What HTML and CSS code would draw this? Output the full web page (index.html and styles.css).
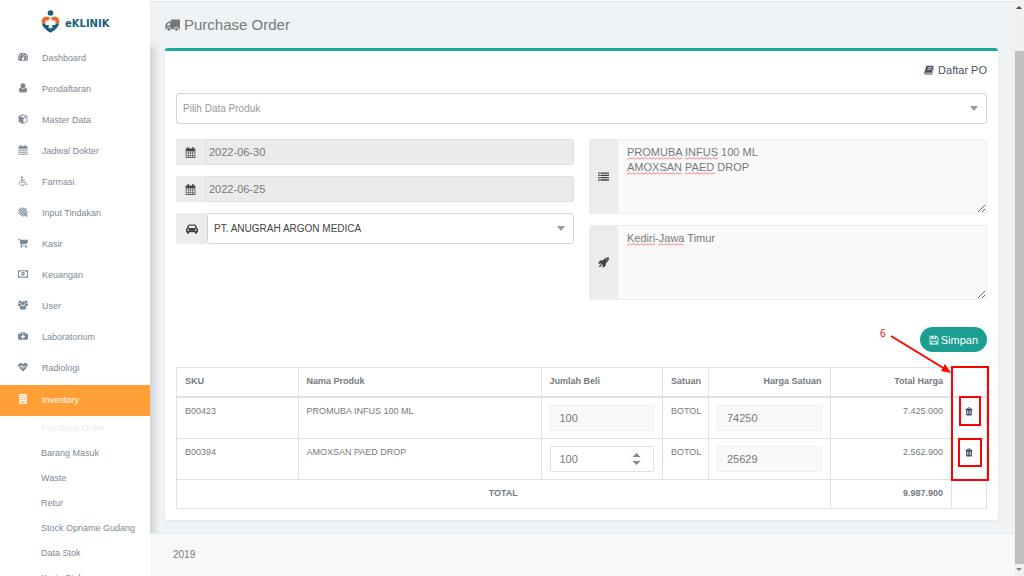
FILE: index.html
```html
<!DOCTYPE html>
<html lang="id">
<head>
    <meta charset="UTF-8">
    <meta name="viewport" content="width=device-width, initial-scale=1.0">
    <title>eKlinik - Purchase Order</title>
    <link rel="stylesheet" href="styles.css">
</head>
<body>
    <!-- Icon sprite -->
    <svg class="sprite" aria-hidden="true">
        <symbol id="i-dashboard" viewBox="0 0 16 16"><path fill-rule="evenodd" d="M8 1a8 8 0 0 0-8 8c0 1.500.4 3.400 1.200 5h13.600C15.600 12.400 16 10.500 16 9a8 8 0 0 0-8-8zM8 2.500a1 1 0 1 1 0 2 1 1 0 0 1 0-2zM3.700 4.300a1 1 0 1 1 0 2 1 1 0 0 1 0-2zM12.300 4.300a1 1 0 1 1 0 2 1 1 0 0 1 0-2zM2.200 8.500a1 1 0 1 1 0 2 1 1 0 0 1 0-2zM13.800 8.500a1 1 0 1 1 0 2 1 1 0 0 1 0-2zM9.300 5.500l.9.300-1 3.700a1.800 1.800 0 1 1-1-.3z"/></symbol>
        <symbol id="i-user" viewBox="0 0 16 16"><circle cx="8" cy="4.500" r="4"/><path d="M4.300 7.300C2 8 1.500 10 1.500 12c0 1.600 1 3 2.500 3h8c1.500 0 2.500-1.400 2.500-3 0-2-.5-4-2.800-4.700a5 5 0 0 1-7.400 0z"/></symbol>
        <symbol id="i-cube" viewBox="0 0 16 16"><path fill-rule="evenodd" d="M8 .5L15 3v9.500L8 16l-7-3.500V3zM8 2L3 3.800 8 5.700l5-1.900zM8.700 7v7.200l5-2.500V5.200z"/></symbol>
        <symbol id="i-calendar" viewBox="0 0 16 16"><path fill-rule="evenodd" d="M3.500 0h2v2h5V0h2v2H15v14H1V2h2.500zM2 6v2.200h2.500V6zm3.300 0v2.200h2.400V6zm3.200 0v2.200h2.300V6zm3.200 0v2.200H14V6zM2 9v2.500h2.500V9zm3.300 0v2.500h2.400V9zm3.200 0v2.500h2.300V9zm3.200 0v2.500H14V9zM2 12.300V15h2.500v-2.700zm3.300 0V15h2.400v-2.700zm3.200 0V15h2.300v-2.700zm3.200 0V15H14v-2.700z"/></symbol>
        <symbol id="i-wheelchair" viewBox="0 0 16 16"><circle cx="6" cy="2" r="1.700"/><path d="M6 4v6h5.500l2 4 2-1M6 6.500h5M4.500 7.500a4.200 4.200 0 1 0 6.300 5" fill="none" stroke="currentColor" stroke-width="1.400"/></symbol>
        <symbol id="i-scan" viewBox="0 0 16 16"><path d="M1 6l5-5M1 10l9-9M3 12l10-10M5 14l9-9M8 15l7-7M10 11l5 4M12 15l3-3" fill="none" stroke="currentColor" stroke-width="1.700"/></symbol>
        <symbol id="i-cart" viewBox="0 0 16 16"><path d="M0 1h3.300l.5 1.700H16L14.800 9l-9.500 1 .3 1.200H14v1.300H4.400L2.300 2.300H0z"/><circle cx="5.500" cy="14.300" r="1.400"/><circle cx="13" cy="14.300" r="1.400"/></symbol>
        <symbol id="i-money" viewBox="0 0 16 16"><path fill-rule="evenodd" d="M0 2h16v12H0zM3 3.500c0 1-.7 1.700-1.600 1.700v5.600c.9 0 1.600.7 1.600 1.700h10c0-1 .7-1.700 1.600-1.700V5.200C13.700 5.200 13 4.500 13 3.500z"/><path fill-rule="evenodd" d="M8 4.500c1.800 0 2.800 1.500 2.800 3.500S9.800 11.500 8 11.500 5.200 10 5.200 8 6.200 4.500 8 4.500zM7 6v1h.6v2.500H7v.8h2.200v-.8h-.6V6z"/></symbol>
        <symbol id="i-users" viewBox="0 0 16 16"><circle cx="3.200" cy="3" r="2.300"/><circle cx="12.800" cy="3" r="2.300"/><circle cx="8" cy="5.300" r="3.200"/><path d="M0 9V6.500C0 5.500.8 5 1.500 5.200c1 .6 2 .6 2.700.3 0 1 .3 2 1 2.700L3 9.500zM16 9V6.500c0-1-.8-1.500-1.500-1.300-1 .6-2 .6-2.700.3 0 1-.3 2-1 2.700l2.200 1.300zM5 8.500C3.200 9 2.700 10.500 2.700 12.500c0 1.500 1 2.700 2.600 2.700h5.400c1.600 0 2.600-1.200 2.600-2.700 0-2-.5-3.500-2.300-4a4.500 4.500 0 0 1-6 0z"/></symbol>
        <symbol id="i-medkit" viewBox="0 0 16 16"><path fill-rule="evenodd" d="M5 4V1.500h6V4h3.500c.9 0 1.500.6 1.500 1.500v7c0 .9-.6 1.500-1.500 1.500h-13C.6 14 0 13.400 0 12.500v-7C0 4.600.6 4 1.500 4zm1.300 0h3.400V2.800H6.300zM7 6v2H5v2h2v2h2v-2h2V8H9V6z"/></symbol>
        <symbol id="i-heartbeat" viewBox="0 0 16 16"><path d="M8 15L1.500 8.800C-1 6 .5 1.500 4.200 1.500 6 1.500 7.200 2.600 8 3.600c.8-1 2-2.100 3.800-2.100 3.700 0 5.200 4.500 2.700 7.300z"/><path d="M0 8h4.500l1.200-2.500 1.600 5 1.900-4L10.300 8H16" fill="none" stroke="#fff" stroke-width="1.100"/></symbol>
        <symbol id="i-building" viewBox="0 0 16 16"><path fill-rule="evenodd" d="M2 0h12v16H2zM4 2v1.600h2V2zm3 0v1.600h2V2zm3 0v1.600h2V2zM4 5.200v1.600h2V5.200zm3 0v1.600h2V5.200zm3 0v1.600h2V5.200zM4 8.500v1.600h2V8.500zm3 0v1.600h2V8.500zm3 0v1.600h2V8.500zM4 12v1.600h2V12zm2.700 0v2.600h2.600V12zM10 12v1.600h2V12z"/></symbol>
        <symbol id="i-truck" viewBox="0 0 18 16"><path fill-rule="evenodd" d="M8 1.500h9c.6 0 1 .4 1 1V12c0 .6-.4 1-1 1H7.100H.8C.4 13 0 12.700 0 12.200l.5-1V8c0-.5.200-1 .6-1.300l2.200-2.200c.4-.4.900-.6 1.400-.6H7V2.500c0-.6.400-1 1-1zM6 5.700H4.600L2 8.200v.3h4z"/><g stroke="#eff3f5" stroke-width="1"><circle cx="4.700" cy="13" r="2.300"/><circle cx="13.700" cy="13" r="2.300"/></g></symbol>
        <symbol id="i-book" viewBox="0 0 16 16"><path fill-rule="evenodd" d="M4.800 1h10.700l-3 11.500H2.700c-1 0-1 1.200 0 1.200h10.400L15.700 4l.3 1-2.700 10H2.500C.8 15 0 13.700.5 12.200L3.500 2c.2-.6.700-1 1.300-1zm1.400 3l-.3 1h6.300l.3-1zm-.7 2.300l-.3 1h6.300l.3-1z"/></symbol>
        <symbol id="i-car" viewBox="0 0 16 16"><path fill-rule="evenodd" d="M4 2h8c.8 0 1.300.4 1.500 1l1.200 3.700c.8.2 1.300.8 1.300 1.700v4h-1.300v1a1.300 1.300 0 0 1-2.600 0v-1H3.900v1a1.300 1.300 0 0 1-2.600 0v-1H0v-4c0-.9.5-1.500 1.300-1.700L2.500 3c.2-.6.700-1 1.500-1zm.3 1.500l-1 3.200h9.400l-1-3.200zM3 8.200a1.200 1.200 0 1 0 0 2.400 1.200 1.200 0 0 0 0-2.400zm10 0a1.200 1.200 0 1 0 0 2.400 1.200 1.200 0 0 0 0-2.400z"/></symbol>
        <symbol id="i-list" viewBox="0 0 16 16"><path d="M0 2h2.500v2H0zM3.500 2H16v2H3.500zM0 5.300h2.500v2H0zM3.500 5.300H16v2H3.500zM0 8.600h2.500v2H0zM3.500 8.600H16v2H3.500zM0 12h2.500v2H0zM3.500 12H16v2H3.500z"/></symbol>
        <symbol id="i-rocket" viewBox="0 0 16 16"><path fill-rule="evenodd" d="M16 .2c0 4-1.300 6.200-4.500 9l-.3 3.600-4 2.700-.8-.7.700-2.500L4.200 9.400l-3.200.5-.8-.7 2.600-4 4.200-.3C9.700 1.700 12 .4 16 .2zM12.700 2.500a.9.900 0 1 0 0 1.800.9.900 0 0 0 0-1.800zM3.500 10.500l2.300 2.300-2.500 1.500-1.800.2.400-1.700z"/></symbol>
        <symbol id="i-save" viewBox="0 0 16 16"><path fill-rule="evenodd" d="M1 1h11l3 3v11H1zm1.300 1.300v11.400h1.400V9h8.600v4.700h1.400V4.500l-2.200-2.200V6.500H4V2.300zm4.700 0v3h2.500v-3zM5 10.300v3.400h6v-3.400z"/></symbol>
        <symbol id="i-trash" viewBox="0 0 16 16"><path fill-rule="evenodd" d="M5.500 0h5l.8 2.300H15v1.500h-1.300V14c0 1-.7 2-1.700 2H4c-1 0-1.700-1-1.700-2V3.800H1V2.300h3.700zm.9 1.300l-.3 1h3.800l-.3-1zM4.700 6v7.500h1.200V6zm2.700 0v7.500h1.200V6zm2.700 0v7.500h1.200V6z"/></symbol>
    </svg>

    <aside class="sidebar">
        <a class="brand" href="#">
            <svg class="brand-mark" viewBox="0 0 20 23" aria-hidden="true">
                <circle cx="9.500" cy="3" r="2.800" fill="#17607c"/>
                <path d="M9.500 9C7.500 6.500 4.800 6 3 7.200.8 8.500.2 11 .9 13.500h3.600v-3h3.200V9z" fill="#f4641e"/>
                <path d="M9.500 9c2-2.500 4.700-3 6.500-1.800 2.200 1.300 2.800 3.800 2.100 6.300h-3.600v-3h-3.200V9z" fill="#f4641e"/>
                <path d="M.9 13.500h3.600V15h3.200v3.300h3.600V15h3.200v-1.500h3.600c-.8 4-4.200 6.500-8.600 9.300C5.100 20 1.700 17.500.9 13.500z" fill="#17607c"/>
            </svg>
            <span>eKLINIK</span>
        </a>
        <nav>
            <ul class="menu">
                <li><a href="#"><svg class="icon"><use href="#i-dashboard"/></svg>Dashboard</a></li>
                <li><a href="#"><svg class="icon"><use href="#i-user"/></svg>Pendaftaran</a></li>
                <li><a href="#"><svg class="icon"><use href="#i-cube"/></svg>Master Data</a></li>
                <li><a href="#"><svg class="icon"><use href="#i-calendar"/></svg>Jadwal Dokter</a></li>
                <li><a href="#"><svg class="icon"><use href="#i-wheelchair"/></svg>Farmasi</a></li>
                <li><a href="#"><svg class="icon"><use href="#i-scan"/></svg>Input Tindakan</a></li>
                <li><a href="#"><svg class="icon"><use href="#i-cart"/></svg>Kasir</a></li>
                <li><a href="#"><svg class="icon"><use href="#i-money"/></svg>Keuangan</a></li>
                <li><a href="#"><svg class="icon"><use href="#i-users"/></svg>User</a></li>
                <li><a href="#"><svg class="icon"><use href="#i-medkit"/></svg>Laboratorium</a></li>
                <li><a href="#"><svg class="icon"><use href="#i-heartbeat"/></svg>Radiologi</a></li>
                <li class="active">
                    <a href="#"><svg class="icon"><use href="#i-building"/></svg>Inventory</a>
                    <ul class="submenu">
                        <li><a class="current" href="#">Purchase Order</a></li>
                        <li><a href="#">Barang Masuk</a></li>
                        <li><a href="#">Waste</a></li>
                        <li><a href="#">Retur</a></li>
                        <li><a href="#">Stock Opname Gudang</a></li>
                        <li><a href="#">Data Stok</a></li>
                        <li><a href="#">Kartu Stok</a></li>
                    </ul>
                </li>
            </ul>
        </nav>
    </aside>

    <div class="page">
        <main class="content">
            <h1><svg class="icon"><use href="#i-truck"/></svg>Purchase Order</h1>

            <form class="panel">
                <div class="toolbar">
                    <a href="#"><svg class="icon"><use href="#i-book"/></svg>Daftar PO</a>
                </div>

                <div class="select product">
                    <select aria-label="Produk">
                        <option>Pilih Data Produk</option>
                    </select>
                </div>

                <div class="fields">
                    <div class="column">
                        <div class="group">
                            <label for="date-po"><svg class="icon"><use href="#i-calendar"/></svg></label>
                            <input class="date" id="date-po" type="text" value="2022-06-30" aria-label="Tanggal PO" readonly>
                        </div>
                        <div class="group">
                            <label for="date-send"><svg class="icon"><use href="#i-calendar"/></svg></label>
                            <input class="date" id="date-send" type="text" value="2022-06-25" aria-label="Tanggal kirim" readonly>
                        </div>
                        <div class="group supplier">
                            <label for="supplier"><svg class="icon"><use href="#i-car"/></svg></label>
                            <div class="select">
                                <select id="supplier" aria-label="Supplier">
                                    <option>PT. ANUGRAH ARGON MEDICA</option>
                                </select>
                            </div>
                        </div>
                    </div>
                    <div class="column">
                        <div class="group">
                            <label for="note"><svg class="icon"><use href="#i-list"/></svg></label>
                            <textarea id="note" aria-label="Keterangan" spellcheck="false">PROMUBA INFUS 100 ML
AMOXSAN PAED DROP</textarea>
                            <!-- spelling marks -->
                            <svg class="marks" aria-hidden="true">
                                <pattern id="wave" width="4" height="3" patternUnits="userSpaceOnUse"><path d="M0 2L1 2 3 .5 4 2" fill="none" stroke="#f58a8a"/></pattern>
                                <path d="M0 18h55v3H0zM58 18h33v3H58zM0 33h55v3H0zM58 33h30v3H58z" fill="url(#wave)"/>
                            </svg>
                        </div>
                        <div class="group">
                            <label for="address"><svg class="icon"><use href="#i-rocket"/></svg></label>
                            <textarea id="address" aria-label="Alamat" spellcheck="false">Kediri-Jawa Timur</textarea>
                            <svg class="marks" aria-hidden="true">
                                <path d="M0 18h28v3H0zM31 18h26v3H31z" fill="url(#wave)"/>
                            </svg>
                        </div>
                    </div>
                </div>

                <div class="actions">
                    <button class="save" type="button"><svg class="icon"><use href="#i-save"/></svg>Simpan</button>
                </div>

                <div class="order">
                    <table>
                        <colgroup>
                            <col class="col-data">
                            <col>
                            <col class="col-data">
                            <col class="col-unit">
                            <col class="col-data">
                            <col class="col-data">
                            <col class="col-action">
                        </colgroup>
                        <thead>
                            <tr>
                                <th>SKU</th>
                                <th>Nama Produk</th>
                                <th>Jumlah Beli</th>
                                <th>Satuan</th>
                                <th class="right">Harga Satuan</th>
                                <th class="right">Total Harga</th>
                                <th></th>
                            </tr>
                        </thead>
                        <tbody>
                            <tr>
                                <td>B00423</td>
                                <td>PROMUBA INFUS 100 ML</td>
                                <td><input type="text" value="100" aria-label="Jumlah beli B00423" readonly></td>
                                <td>BOTOL</td>
                                <td><input type="text" value="74250" aria-label="Harga satuan B00423" readonly></td>
                                <td class="right">7.425.000</td>
                                <td class="center"><button class="delete" type="button" aria-label="Hapus B00423"><svg class="icon"><use href="#i-trash"/></svg></button></td>
                            </tr>
                            <tr>
                                <td>B00394</td>
                                <td>AMOXSAN PAED DROP</td>
                                <td><input type="number" value="100" aria-label="Jumlah beli B00394"></td>
                                <td>BOTOL</td>
                                <td><input type="text" value="25629" aria-label="Harga satuan B00394" readonly></td>
                                <td class="right">2.562.900</td>
                                <td class="center"><button class="delete" type="button" aria-label="Hapus B00394"><svg class="icon"><use href="#i-trash"/></svg></button></td>
                            </tr>
                        </tbody>
                        <tfoot>
                            <tr>
                                <th class="center" colspan="5">TOTAL</th>
                                <th class="right">9.987.900</th>
                                <th></th>
                            </tr>
                        </tfoot>
                    </table>

                    <!-- Step 6 callout: delete column -->
                    <svg class="callout" viewBox="0 0 120 160">
                        <g fill="none" stroke="#f00" stroke-width="2">
                            <rect x="83" y="43" width="36" height="113"/>
                            <rect x="91" y="73" width="20" height="28"/>
                            <rect x="90" y="115" width="22" height="27"/>
                            <path d="M22 12L76 45"/>
                        </g>
                        <path d="M82 49L72 47 76 40z" fill="#f00"/>
                        <text x="11" y="13">6</text>
                    </svg>
                </div>
            </form>
        </main>
        <footer>2019</footer>
    </div>

    <div class="scrollbar" aria-hidden="true">
        <i class="up"></i>
        <i class="thumb"></i>
        <i class="down"></i>
    </div>
</body>
</html>
```

FILE: styles.css
```css
* {
    box-sizing: border-box;
}

body {
    margin: 0;
    display: flex;
    height: 100vh;
    overflow: hidden;
    background: #fff;
    color: #76797c;
    font-family: "Liberation Sans", Arial, sans-serif;
    font-size: 9px;
    line-height: 13px;
}

a {
    color: inherit;
    text-decoration: none;
}

ul {
    list-style: none;
    margin: 0;
    padding: 0;
}

input,
select,
textarea,
button {
    font-family: inherit;
    color: inherit;
    margin: 0;
}

.sprite {
    position: absolute;
    width: 0;
    height: 0;
}

.icon {
    width: 10px;
    height: 10px;
    fill: currentColor;
    flex: none;
}

/* Sidebar */
.sidebar {
    width: 150px;
    flex: none;
    overflow: hidden;
    color: #7d8994;
}

.brand {
    display: flex;
    align-items: center;
    gap: 4px;
    height: 43px;
    padding-left: 41px;
    color: #17607c;
    font: bold 10px "DejaVu Sans", sans-serif;
}

.brand span {
    padding-top: 4px;
}

.brand-mark {
    width: 20px;
    height: 23px;
}

.menu > li > a {
    display: flex;
    align-items: center;
    gap: 14px;
    height: 31px;
    padding-left: 18px;
}

.menu > li > a .icon {
    margin-bottom: 3px;
}

.menu > .active > a {
    height: 32px;
    border-top: 1px solid #fff;
    background: #ff9f35;
    color: #fff;
}

.submenu a {
    display: block;
    padding: 6px 0 6px 41px;
}

.submenu .current {
    color: #eceef1;
}

/* Page */
.page {
    flex: 1;
    min-width: 0;
    display: flex;
    flex-direction: column;
}

.content {
    position: relative;
    padding: 0 16px 13px 15px;
    border-top: 1px solid #fff;
    background: #eff3f5;
    box-shadow: inset 0 1px 1px #e0e4e6;
}

/* shade thrown by the sidebar */
.content::before {
    content: "";
    position: absolute;
    left: 0;
    top: 38px;
    bottom: 0;
    width: 10px;
    background:
        linear-gradient(#eff3f5, transparent 14px),
        linear-gradient(to right, #cfd4d6, #eff3f5);
}

h1 {
    display: flex;
    align-items: center;
    gap: 4px;
    height: 47px;
    margin: 0;
    font-size: 15px;
    font-weight: normal;
}

h1 .icon {
    width: 15px;
    height: 14px;
}

.panel {
    padding: 11px;
    border-top: 3px solid #1aab9b;
    border-radius: 3px;
    background: #fff;
    box-shadow: 0 1px 3px #e0e5e7;
}

.toolbar {
    display: flex;
    justify-content: flex-end;
    margin-bottom: 15px;
    color: #46525f;
    font-size: 11px;
    line-height: 16px;
}

.toolbar a {
    display: flex;
    align-items: center;
    gap: 4px;
}

.select {
    position: relative;
    flex: 1;
}

.select::after {
    content: "";
    position: absolute;
    right: 9px;
    top: 13px;
    border: 4px solid transparent;
    border-top: 5px solid #999;
    border-bottom: 0;
}

.select select {
    display: block;
    appearance: none;
    width: 100%;
    height: 31px;
    padding: 0 6px;
    border: 1px solid #d2d4d6;
    border-radius: 3px;
    background: #fff;
    color: #444;
    font-size: 10px;
}

.product {
    margin-bottom: 15px;
}

.product select {
    color: #999;
}

.fields {
    display: grid;
    grid-template-columns: 1fr 1fr;
    gap: 15px;
}

.column {
    display: flex;
    flex-direction: column;
    gap: 11px;
}

.group {
    position: relative;
    display: flex;
}

.group label {
    display: flex;
    align-items: center;
    justify-content: center;
    width: 29px;
    background: #ececec;
    color: #444;
}

.group label .icon {
    width: 11px;
    height: 11px;
}

.supplier label {
    width: 31px;
}

.supplier label .icon {
    width: 12px;
    height: 12px;
}

.date {
    flex: 1;
    min-width: 0;
    height: 26px;
    padding: 0 3px;
    border: 1px solid #dedede;
    border-radius: 0 3px 3px 0;
    background: #ebebeb;
    font-size: 11px;
}

.group textarea {
    flex: 1;
    min-width: 0;
    height: 75px;
    padding: 5px 9px;
    border: 1px solid #eee;
    border-left: 0;
    border-radius: 0 2px 2px 0;
    background: #f9f9f9;
    font-size: 11px;
    line-height: 15px;
}

.marks {
    position: absolute;
    left: 38px;
    top: 0;
    width: 100px;
    height: 40px;
    pointer-events: none;
}

.actions {
    display: flex;
    justify-content: flex-end;
    margin: 27px 0 15px;
}

.save {
    display: flex;
    align-items: center;
    gap: 2px;
    height: 25px;
    padding: 0 9px;
    border: 0;
    border-radius: 13px;
    background: #1c9f91;
    color: #fff;
    font-size: 11px;
}

/* Order lines */
.order {
    position: relative;
}

table {
    width: 100%;
    table-layout: fixed;
    border-collapse: collapse;
}

.col-data {
    width: 15%;
}

.col-unit {
    width: 46px;
}

.col-action {
    width: 35px;
}

th,
td {
    padding: 7px 8px;
    border: 1px solid #e0e1e2;
    text-align: left;
    vertical-align: top;
    white-space: nowrap;
}

thead th {
    padding-bottom: 8px;
    border-bottom-width: 2px;
}

tfoot th {
    padding-bottom: 8px;
}

.right {
    text-align: right;
}

.center {
    text-align: center;
}

td input {
    display: block;
    width: 100%;
    height: 26px;
    padding: 0 9px;
    border: 1px solid #e0e1e2;
    border-radius: 2px;
    background: #fff;
    font-size: 11px;
}

td input[readonly] {
    border-color: #f0f0f0;
    background: #f9f9f9;
}

td input::-webkit-inner-spin-button {
    opacity: 1;
}

.delete {
    padding: 0;
    border: 0;
    background: none;
    color: #3c4654;
    line-height: 13px;
}

.delete .icon {
    display: block;
    width: 8px;
    height: 9px;
    margin: 2px 0;
}

.callout {
    position: absolute;
    top: -43px;
    right: -2px;
    width: 120px;
    height: 160px;
    pointer-events: none;
}

.callout text {
    fill: #f00;
    font: 10px "Noto Sans", sans-serif;
}

footer {
    flex: 1;
    padding: 14px 23px;
    border-top: 1px solid #e8ebec;
    background: #f8f8f8;
    font-size: 10px;
}

/* Scrollbar */
.scrollbar {
    display: flex;
    flex-direction: column;
    align-items: center;
    width: 10px;
    flex: none;
    padding: 6px 0 5px;
    background: #f0f0f0;
}

.scrollbar .up,
.scrollbar .down {
    border: 3px solid transparent;
}

.scrollbar .up {
    border-top: 0;
    border-bottom-color: #444;
    margin-bottom: 42px;
}

.scrollbar .thumb {
    flex: 1;
    width: 9px;
    align-self: flex-end;
    background: #c0c0c0;
}

.scrollbar .down {
    border-bottom: 0;
    border-top-color: #888;
    margin-top: 4px;
}
```
